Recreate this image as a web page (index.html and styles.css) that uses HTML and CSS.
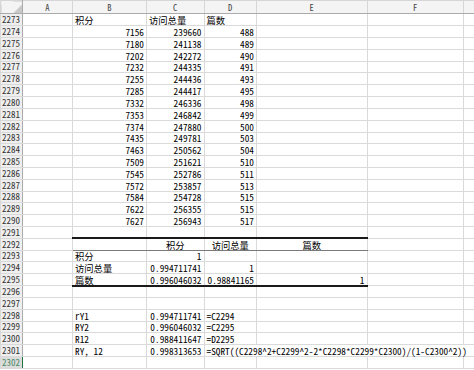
FILE: index.html
```html
<!DOCTYPE html>
<html lang="zh-CN">
<head>
  <meta charset="UTF-8">
  <meta name="viewport" content="width=device-width, initial-scale=1.0">
  <title>Sheet1</title>
  <link rel="stylesheet" href="styles.css">
</head>
<body>

  <!-- Worksheet grid -->
  <table class="sheet">
    <colgroup>
      <col class="c-rh">
      <col class="c-a">
      <col class="c-b">
      <col class="c-c">
      <col class="c-d">
      <col class="c-e">
      <col class="c-f">
      <col class="c-g">
    </colgroup>
    <thead>
      <tr>
        <th class="corner"></th>
        <th>A</th><th>B</th><th>C</th><th>D</th><th>E</th><th>F</th><th></th>
      </tr>
    </thead>
    <tbody>
      <tr><td class="rh">2273</td><td></td><td>积分</td><td>访问总量</td><td>篇数</td><td></td><td></td><td></td></tr>
      <tr><td class="rh">2274</td><td></td><td class="num">7156</td><td class="num">239660</td><td class="num">488</td><td></td><td></td><td></td></tr>
      <tr><td class="rh">2275</td><td></td><td class="num">7180</td><td class="num">241138</td><td class="num">489</td><td></td><td></td><td></td></tr>
      <tr><td class="rh">2276</td><td></td><td class="num">7202</td><td class="num">242272</td><td class="num">490</td><td></td><td></td><td></td></tr>
      <tr><td class="rh">2277</td><td></td><td class="num">7232</td><td class="num">244335</td><td class="num">491</td><td></td><td></td><td></td></tr>
      <tr><td class="rh">2278</td><td></td><td class="num">7255</td><td class="num">244436</td><td class="num">493</td><td></td><td></td><td></td></tr>
      <tr><td class="rh">2279</td><td></td><td class="num">7285</td><td class="num">244417</td><td class="num">495</td><td></td><td></td><td></td></tr>
      <tr><td class="rh">2280</td><td></td><td class="num">7332</td><td class="num">246336</td><td class="num">498</td><td></td><td></td><td></td></tr>
      <tr><td class="rh">2281</td><td></td><td class="num">7353</td><td class="num">246842</td><td class="num">499</td><td></td><td></td><td></td></tr>
      <tr><td class="rh">2282</td><td></td><td class="num">7374</td><td class="num">247880</td><td class="num">500</td><td></td><td></td><td></td></tr>
      <tr><td class="rh">2283</td><td></td><td class="num">7435</td><td class="num">249781</td><td class="num">503</td><td></td><td></td><td></td></tr>
      <tr><td class="rh">2284</td><td></td><td class="num">7463</td><td class="num">250562</td><td class="num">504</td><td></td><td></td><td></td></tr>
      <tr><td class="rh">2285</td><td></td><td class="num">7509</td><td class="num">251621</td><td class="num">510</td><td></td><td></td><td></td></tr>
      <tr><td class="rh">2286</td><td></td><td class="num">7545</td><td class="num">252786</td><td class="num">511</td><td></td><td></td><td></td></tr>
      <tr><td class="rh">2287</td><td></td><td class="num">7572</td><td class="num">253857</td><td class="num">513</td><td></td><td></td><td></td></tr>
      <tr><td class="rh">2288</td><td></td><td class="num">7584</td><td class="num">254728</td><td class="num">515</td><td></td><td></td><td></td></tr>
      <tr><td class="rh">2289</td><td></td><td class="num">7622</td><td class="num">256355</td><td class="num">515</td><td></td><td></td><td></td></tr>
      <tr><td class="rh">2290</td><td></td><td class="num">7627</td><td class="num">256943</td><td class="num">517</td><td></td><td></td><td></td></tr>
      <tr><td class="rh">2291</td><td></td><td></td><td></td><td></td><td></td><td></td><td></td></tr>

      <!-- Correlation table -->
      <tr class="corr-head"><td class="rh">2292</td><td></td><td class="t"></td><td class="t mid">积分</td><td class="t mid">访问总量</td><td class="t mid">篇数</td><td></td><td></td></tr>
      <tr><td class="rh">2293</td><td></td><td>积分</td><td class="num">1</td><td></td><td></td><td></td><td></td></tr>
      <tr><td class="rh">2294</td><td></td><td>访问总量</td><td class="num">0.994711741</td><td class="num">1</td><td></td><td></td><td></td></tr>
      <tr><td class="rh">2295</td><td></td><td class="b">篇数</td><td class="b num">0.996046032</td><td class="b num">0.98841165</td><td class="b num">1</td><td></td><td></td></tr>

      <tr><td class="rh">2296</td><td></td><td></td><td></td><td></td><td></td><td></td><td></td></tr>
      <tr><td class="rh">2297</td><td></td><td></td><td></td><td></td><td></td><td></td><td></td></tr>
      <tr><td class="rh">2298</td><td></td><td>rY1</td><td class="num">0.994711741</td><td>=C2294</td><td></td><td></td><td></td></tr>
      <tr><td class="rh">2299</td><td></td><td>RY2</td><td class="num">0.996046032</td><td>=C2295</td><td></td><td></td><td></td></tr>
      <tr><td class="rh">2300</td><td></td><td>R12</td><td class="num">0.988411647</td><td>=D2295</td><td></td><td></td><td></td></tr>
      <tr><td class="rh">2301</td><td></td><td>RY, 12</td><td class="num">0.998313653</td><td colspan="4">=SQRT((C2298^2+C2299^2-2*C2298*C2299*C2300)/(1-C2300^2))</td></tr>
      <tr><td class="rh active">2302</td><td></td><td></td><td></td><td></td><td></td><td></td><td></td></tr>
    </tbody>
  </table>

</body>
</html>
```

FILE: styles.css
```css
/* Worksheet look */
* {
  box-sizing: border-box;
  margin: 0;
  padding: 0;
}

body {
  background-color: #fff;
  color: #000;
  font-family: "Noto Sans Mono CJK SC", "Noto Sans CJK SC", "Liberation Mono", monospace;
  font-size: 9.3px;
  overflow: hidden;
}

.sheet {
  border-collapse: collapse;
  table-layout: fixed;
  width: 474px;
}

/* column widths */
.c-rh { width: 22px; }
.c-a { width: 50px; }
.c-b { width: 74px; }
.c-c { width: 57.5px; }
.c-d { width: 52.5px; }
.c-e { width: 110.5px; }
.c-f { width: 96.5px; }
.c-g { width: 11px; }

.sheet td {
  height: 11.82px;
  border: 1px solid #dadada;
  padding: 0 2px;
  line-height: 10px;
  vertical-align: bottom;
  white-space: nowrap;
  overflow: visible;
}

/* column letters */
.sheet th {
  height: 13.4px;
  background-color: #f4f4f4;
  border: 1px solid #d6d6d6;
  border-bottom-color: #ababab;
  color: #444;
  font-weight: normal;
  font-size: 8.5px;
  line-height: 10px;
  vertical-align: middle;
}

.sheet th.corner {
  background: linear-gradient(135deg, #f4f4f4 72%, #c8c8c8 72%);
  border-right-color: #ababab;
}

/* row numbers */
.sheet td.rh {
  background-color: #efefef;
  border-color: #d9d9d9;
  border-right-color: #ababab;
  color: #333;
  padding: 0 0 0 1px;
  font-size: 9px;
}

.sheet td.rh.active {
  background-color: #dcdcdc;
  color: #4a8a64;
  border-right: 1px solid #217346;
}

.num {
  text-align: right;
}

.mid {
  text-align: center;
}

/* correlation block borders */
.sheet td.t {
  border-top: 2px solid #1a1a1a;
  border-bottom: 1px solid #7a7a7a;
}

.sheet td.b {
  border-bottom: 2px solid #1a1a1a;
}
```
